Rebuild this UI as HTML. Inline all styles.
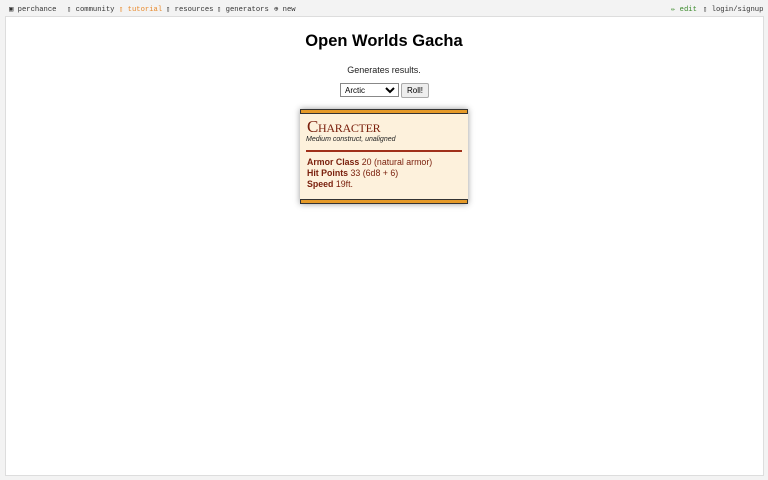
<!DOCTYPE html>
<html><head><style>
body{margin:0;width:768px;height:480px;background:#f3f3f3;overflow:hidden;font-family:"Liberation Sans",sans-serif;}
.top{position:absolute;top:0;left:0;right:0;height:16px;font-family:"Liberation Mono",monospace;font-size:7.2px;color:#333;}
.top span{position:absolute;top:4px;white-space:nowrap}
.frame{position:absolute;left:5px;top:16px;width:757px;height:458px;background:#fff;border:1px solid #ddd;}
h1{position:absolute;top:32px;left:0;width:768px;text-align:center;font-size:16.5px;font-weight:bold;margin:0;color:#000;}
.desc{position:absolute;top:65px;width:768px;text-align:center;font-size:9px;color:#222}
select{position:absolute;left:340px;top:83px;width:59px;height:14px;font-size:8px;padding:0;border:1px solid #888;background:#fff}
.btn{position:absolute;left:401px;top:83px;width:26px;height:13px;font-size:8px;border:1px solid #aaa;background:#eee;text-align:center;line-height:13px;border-radius:2px}
.card{position:absolute;left:300px;top:109px;width:168px;height:95px;background:#fdf1dc;box-shadow:0 0 6px #999;}
.bar{position:absolute;left:0;width:168px;height:5px;background:#e69a28;border:1px solid #333;box-sizing:border-box}
.t{position:absolute;left:7px;top:8px;font-family:"Liberation Serif",serif;color:#7a200d;font-size:17px;font-variant:small-caps;letter-spacing:-0.3px}
.s{position:absolute;left:6px;top:27px;font-size:7px;font-style:italic;color:#222;white-space:nowrap}
.rule{position:absolute;left:6px;top:41px;width:156px;height:2px;background:#a0301a}
.l{position:absolute;left:7px;font-size:8.8px;color:#7a200d;white-space:nowrap}
.l b{font-weight:bold}
</style></head><body>
<div class="top">
<span style="left:9px">▣ perchance</span>
<span style="left:67px">▯ community</span>
<span style="left:119px;color:#e8892b">▯ tutorial</span>
<span style="left:166px">▯ resources</span>
<span style="left:217px">▯ generators</span>
<span style="left:274px">⊕ new</span>
<span style="left:671px;color:#3a8a2a">✏ edit</span>
<span style="left:703px">▯ login/signup</span>
</div>
<div class="frame"></div>
<h1>Open Worlds Gacha</h1>
<div class="desc">Generates results.</div>
<select><option>Arctic</option></select>
<div class="btn">Roll!</div>
<div class="card">
<div class="bar" style="top:0"></div>
<div class="t">Character</div>
<div class="s">Medium construct, unaligned</div>
<div class="rule"></div>
<div class="l" style="top:48px"><b>Armor Class</b> 20 (natural armor)</div>
<div class="l" style="top:59px"><b>Hit Points</b> 33 (6d8 + 6)</div>
<div class="l" style="top:70px"><b>Speed</b> 19ft.</div>
<div class="bar" style="top:90px"></div>
</div>
</body></html>
